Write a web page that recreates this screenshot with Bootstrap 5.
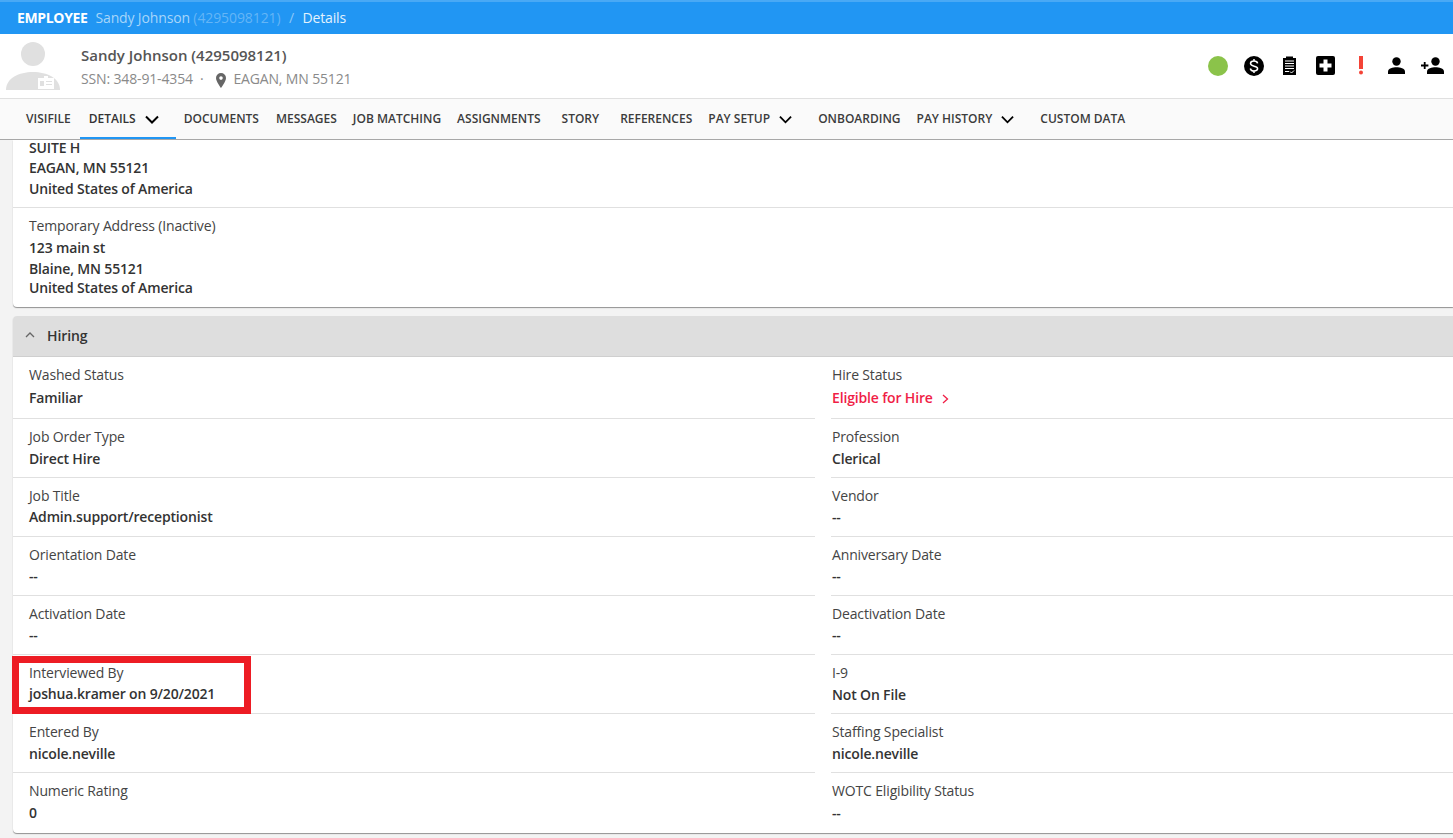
<!DOCTYPE html>
<html lang="en">
<head>
<meta charset="utf-8">
<title>Employee Details</title>
<link href="https://cdn.jsdelivr.net/npm/bootstrap@5.3.0/dist/css/bootstrap.min.css" rel="stylesheet">
<style>
html,body{height:838px;overflow:hidden}
body{font-family:"Open Sans",sans-serif;font-size:14px;background:#f3f3f3;color:#333}
.topbar{height:34px;background:#2196f3;border-top:2px solid #49a9f5;padding-left:17px;color:#fff;font-size:14px;line-height:32px;letter-spacing:-.15px}
.topbar b{font-weight:700;margin-right:8px;letter-spacing:-.35px}
.crumb-a{color:#a6d5fa}
.crumb-b{color:#64b5f6;letter-spacing:-.1px}
.crumb-s{color:#8cc8f8;margin:0 5px}
.crumb-c{color:#e3f2fd}
.headbar{height:65px;background:#fff;border-bottom:1px solid #e0e0e0;padding-bottom:1px}
.avatar{margin-left:6px;width:54px;margin-top:8px}
.emp{margin-left:21px;padding-top:10px}
.emp-name{font-size:15px;font-weight:600;color:#555;line-height:23px}
.emp-sub{font-size:14px;color:#8a8a8a;line-height:23px;letter-spacing:-.15px}
.dotsep{margin:0 5px 0 7px}
.pin{margin:0 6px 0 7px}
.icons{margin-right:3px}
.ico{width:35.700px;height:24px;display:flex;align-items:center;justify-content:center}
.tabs{height:41px;background:#fafafa;border-bottom:1px solid #a8a8a8;padding-left:18px;font-size:12px;font-weight:600;color:#3c3c3c}
.tab{padding:0 8px;height:40px;display:flex;align-items:center;white-space:nowrap;color:#3c3c3c;text-decoration:none}
.tab.first{padding-right:9px}
.tab.docs{padding-right:9px}
.tab.on{border-bottom:2px solid #2196f3;padding:2px 17px 0 9px;color:#333}
.tab.caret{padding-right:18px}
.tab svg{margin-left:9px}
.tab.wide{padding:0 13px}
.lbl{line-height:21px;color:#444;font-size:14px;letter-spacing:-.15px}
.val{line-height:21px;font-weight:600;color:#333;font-size:14px;letter-spacing:-.16px}
.pane{margin-left:13px;background:#fff;box-shadow:0 1px 1px rgba(0,0,0,.4);border-radius:0 0 0 4px}
.pane-a{height:167px;padding:0 16px}
.addr-top{height:67px;padding-bottom:8px}
.addr-top div:first-child{margin-bottom:-1px}
.rule{height:1px;background:#e0e0e0;margin:0 -16px}
.addr-b{padding-top:7px}
.addr-b .lbl{line-height:22px}
.addr-b .val:last-child{line-height:18px}
.pane-b{margin-top:9px;border-radius:4px 0 0 4px}
.phead{height:41px;background:#dedede;border-bottom:1px solid #cfcfcf;display:flex;align-items:center;padding:0 0 2px 12px;font-weight:600;color:#333;border-radius:4px 0 0 0;letter-spacing:-.1px}
.phead svg{margin-right:12px}
.fields{display:grid;grid-template-columns:802px 1fr;column-gap:16px}
.cell{height:59px;padding:7px 16px 0;border-bottom:1px solid #e0e0e0}
.cell.r{padding-left:1px}
.cell.first{height:62px}
.cell.first .val{line-height:23px;margin-top:1px}
.cell.last{height:60px;border-bottom:0}
.cell.last .val,.cell.bump .val{margin-top:1px}
.flag{color:#f01e46;text-decoration:none}
.flag svg{margin-left:6px}
.callout{position:relative}
.callout::after{content:"";position:absolute;left:-1px;top:1px;width:239px;height:58px;border:7px solid #ed1c24;pointer-events:none}
</style>
</head>
<body>
<div class="topbar"><b>EMPLOYEE</b><span class="crumb-a">Sandy Johnson</span> <span class="crumb-b">(4295098121)</span> <span class="crumb-s">/</span> <span class="crumb-c">Details</span></div>

<div class="headbar d-flex">
  <svg class="avatar" height="50" viewBox="0 0 54 50" aria-hidden="true">
    <circle cx="27" cy="12" r="12" fill="#e0e0e0"/>
    <path d="M0 48c0-12 13-18 27-18s27 6 27 18z" fill="#e0e0e0"/>
    <path d="M32 36h6v-2h4v2h6v11H32z" fill="#fff"/>
    <path d="M34 39h4v5h-4zM40 39h6v1h-6zM40 42h6v1h-6z" fill="#e0e0e0"/>
  </svg>
  <div class="emp">
    <div class="emp-name">Sandy Johnson (4295098121)</div>
    <div class="emp-sub">SSN: 348-91-4354<span class="dotsep">·</span><svg class="pin" width="12" height="15" viewBox="0 0 12 15" aria-hidden="true"><path fill-rule="evenodd" d="M6 0a5 5 0 0 1 5 5c0 3.600-5 10-5 10S1 8.600 1 5a5 5 0 0 1 5-5zm0 3.300a1.800 1.800 0 1 0 0 3.600 1.800 1.800 0 0 0 0-3.600z" fill="#666"/></svg>EAGAN, MN 55121</div>
  </div>
  <div class="icons ms-auto d-flex align-items-center">
    <span class="ico"><svg width="20" height="20" aria-hidden="true"><circle cx="10" cy="10" r="10" fill="#8bc34a"/></svg></span>
    <span class="ico"><svg width="20" height="20" viewBox="0 0 20 20" aria-hidden="true"><circle cx="10" cy="10" r="10" fill="#000"/><path d="M13.600 7.300C13.300 5.900 11.900 5.100 10 5.100c-2 0-3.500 1-3.500 2.500 0 3.600 7.100 1.600 7.100 5 0 1.500-1.600 2.400-3.600 2.400-2 0-3.400-.9-3.700-2.500M10 3v2.100M10 15v2" fill="none" stroke="#fff" stroke-width="1.500"/></svg></span>
    <span class="ico"><svg width="13" height="19" viewBox="0 0 13 19" aria-hidden="true"><path d="M0 2h3V.5h7V2h3v17H0z" fill="#000"/><path d="M2 5h9M2 7.500h9M2 10h9M2 12.500h9M2 15.500h4" stroke="#fff" stroke-width="1"/><path d="M7 15.500l1.500 1.500 2.500-2.500" stroke="#fff" fill="none"/></svg></span>
    <span class="ico"><svg width="19" height="19" viewBox="0 0 19 19" aria-hidden="true"><rect width="19" height="19" rx="2" fill="#000"/><path d="M7.500 3.500h4v4h4v4h-4v4h-4v-4h-4v-4h4z" fill="#fff"/></svg></span>
    <span class="ico"><svg width="6" height="19" viewBox="0 0 6 19" aria-hidden="true"><path d="M1 0h4v13H1z" fill="#f44336"/><circle cx="3" cy="16.500" r="2" fill="#f44336"/></svg></span>
    <span class="ico"><svg width="17" height="17" viewBox="0 0 17 17" aria-hidden="true"><circle cx="8.500" cy="4.500" r="4.200" fill="#000"/><path d="M0 17v-2.500c0-3 5-4.300 8.500-4.300s8.500 1.300 8.500 4.300V17z" fill="#000"/></svg></span>
    <span class="ico"><svg width="23" height="17" viewBox="0 0 23 17" aria-hidden="true"><circle cx="14.500" cy="4.500" r="4.200" fill="#000"/><path d="M6 17v-2.500c0-3 5-4.300 8.500-4.300s8.500 1.300 8.500 4.300V17z" fill="#000"/><path d="M3.700 5v7M0 8.500h7.400" stroke="#000" stroke-width="1.800"/></svg></span>
  </div>
</div>

<nav class="tabs d-flex">
  <a class="tab first" href="#">VISIFILE</a>
  <a class="tab on" href="#">DETAILS<svg width="14" height="9" viewBox="0 0 14 9" aria-hidden="true"><path d="M1 1.500l6 6 6-6" fill="none" stroke="#000" stroke-width="2"/></svg></a>
  <a class="tab docs" href="#">DOCUMENTS</a>
  <a class="tab" href="#">MESSAGES</a>
  <a class="tab" href="#">JOB MATCHING</a>
  <a class="tab" href="#">ASSIGNMENTS</a>
  <a class="tab wide" href="#">STORY</a>
  <a class="tab" href="#">REFERENCES</a>
  <a class="tab caret" href="#">PAY SETUP<svg width="13" height="9" viewBox="0 0 14 9" aria-hidden="true"><path d="M1 1.500l6 6 6-6" fill="none" stroke="#000" stroke-width="2"/></svg></a>
  <a class="tab" href="#">ONBOARDING</a>
  <a class="tab caret" href="#">PAY HISTORY<svg width="13" height="9" viewBox="0 0 14 9" aria-hidden="true"><path d="M1 1.500l6 6 6-6" fill="none" stroke="#000" stroke-width="2"/></svg></a>
  <a class="tab" href="#">CUSTOM DATA</a>
</nav>

<section class="pane pane-a">
  <div class="addr-top val d-flex flex-column justify-content-end"><div>SUITE H</div><div>EAGAN, MN 55121</div><div>United States of America</div></div>
  <div class="rule"></div>
  <div class="addr-b"><div class="lbl">Temporary Address (Inactive)</div><div class="val">123 main st</div><div class="val">Blaine, MN 55121</div><div class="val">United States of America</div></div>
</section>

<section class="pane pane-b">
  <div class="phead"><svg width="10" height="6" viewBox="0 0 10 6" aria-hidden="true"><path d="M1 5l4-4 4 4" fill="none" stroke="#666" stroke-width="1.300"/></svg>Hiring</div>
  <div class="fields">
    <div class="cell first"><div class="lbl">Washed Status</div><div class="val">Familiar</div></div>
    <div class="cell first r"><div class="lbl">Hire Status</div><div class="val"><a class="flag" href="#">Eligible for Hire <svg width="7" height="10" viewBox="0 0 7 10" aria-hidden="true"><path d="M1 1l4.500 4L1 9" fill="none" stroke="#f01e46" stroke-width="1.300"/></svg></a></div></div>
    <div class="cell bump"><div class="lbl">Job Order Type</div><div class="val">Direct Hire</div></div>
    <div class="cell r bump"><div class="lbl">Profession</div><div class="val">Clerical</div></div>
    <div class="cell"><div class="lbl">Job Title</div><div class="val">Admin.support/receptionist</div></div>
    <div class="cell r"><div class="lbl">Vendor</div><div class="val">--</div></div>
    <div class="cell"><div class="lbl">Orientation Date</div><div class="val">--</div></div>
    <div class="cell r"><div class="lbl">Anniversary Date</div><div class="val">--</div></div>
    <div class="cell"><div class="lbl">Activation Date</div><div class="val">--</div></div>
    <div class="cell r"><div class="lbl">Deactivation Date</div><div class="val">--</div></div>
    <div class="cell callout"><div class="lbl">Interviewed By</div><div class="val">joshua.kramer on 9/20/2021</div></div>
    <div class="cell r bump"><div class="lbl">I-9</div><div class="val">Not On File</div></div>
    <div class="cell bump"><div class="lbl">Entered By</div><div class="val">nicole.neville</div></div>
    <div class="cell r bump"><div class="lbl">Staffing Specialist</div><div class="val">nicole.neville</div></div>
    <div class="cell last"><div class="lbl">Numeric Rating</div><div class="val">0</div></div>
    <div class="cell last r"><div class="lbl">WOTC Eligibility Status</div><div class="val">--</div></div>
  </div>
</section>
<script src="https://cdn.jsdelivr.net/npm/bootstrap@5.3.0/dist/js/bootstrap.bundle.min.js"></script>
</body>
</html>
